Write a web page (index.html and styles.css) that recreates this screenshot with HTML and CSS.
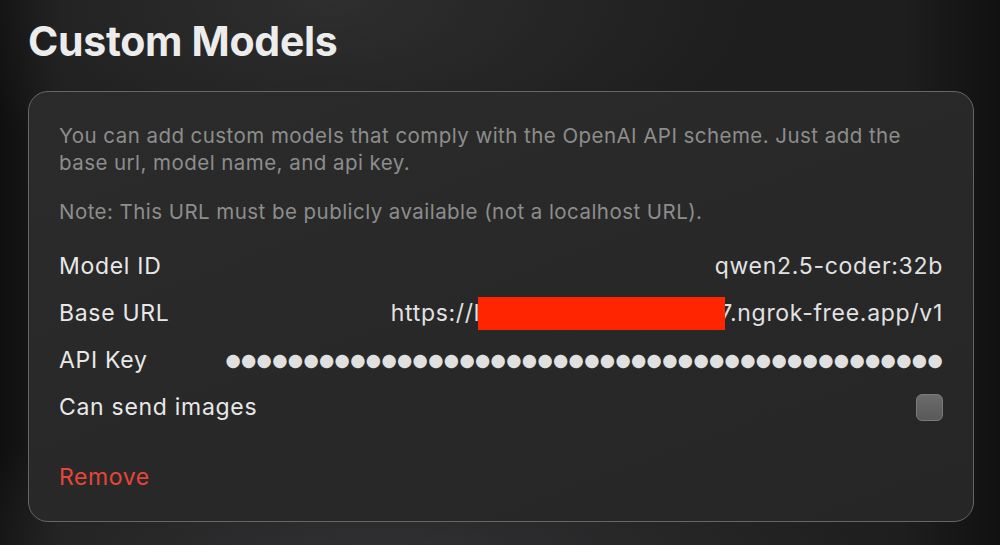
FILE: index.html
```html
<!DOCTYPE html>
<html lang="en">
<head>
<meta charset="utf-8">
<title>Custom Models</title>
<link rel="stylesheet" href="styles.css">
</head>
<body>
<main class="page">
  <h1 class="title">Custom Models</h1>
  <section class="card">
    <p class="desc">You can add custom models that comply with the OpenAI API scheme. Just add the base url, model name, and api key.</p>
    <p class="desc note">Note: This URL must be publicly available (not a localhost URL).</p>
    <div class="rows">
      <div class="row">
        <span class="label">Model ID</span>
        <span class="value">qwen2.5-coder:32b</span>
      </div>
      <div class="row">
        <span class="label">Base URL</span>
        <span class="value url"><span>https://l</span><span class="redact"></span><span>7.ngrok-free.app/v1</span></span>
      </div>
      <div class="row">
        <span class="label">API Key</span>
        <span class="value dots">●●●●●●●●●●●●●●●●●●●●●●●●●●●●●●●●●●●●●●●●●●●●●●</span>
      </div>
      <div class="row">
        <span class="label">Can send images</span>
        <span class="checkbox"></span>
      </div>
    </div>
    <div class="remove">Remove</div>
  </section>
</main>
</body>
</html>
```

FILE: styles.css
```css
html, body {
  margin: 0;
  padding: 0;
  height: 100%;
}
body {
  background:
    radial-gradient(ellipse 420px 200px at 330px 0px, rgba(60,60,60,0.55), rgba(60,60,60,0) 100%),
    radial-gradient(ellipse 520px 160px at 380px 560px, rgba(62,62,66,0.6), rgba(62,62,66,0) 100%),
    linear-gradient(90deg, #0f0f0f 0px, #1d1d1d 60px, #1e1e1e 900px, #111111 1000px);
  font-family: Inter, "Liberation Sans", sans-serif;
  overflow: hidden;
}
.page {
  padding: 16px 0 0 28px;
  width: 946px;
}
.title {
  margin: 0;
  font-size: 41px;
  line-height: 50px;
  font-weight: 700;
  letter-spacing: -0.3px;
  color: #ececec;
}
.card {
  margin-top: 25px;
  box-sizing: border-box;
  width: 946px;
  height: 431px;
  border: 1px solid #666666;
  border-radius: 20px;
  background: linear-gradient(160deg, #2b2b2b 0%, #282828 60%, #262626 100%);
  padding: 30px 30px 0 30px;
}
.desc {
  margin: 0;
  font-size: 20.5px;
  letter-spacing: 0.45px;
  line-height: 27px;
  color: #8d8d8d;
}
.note {
  margin-top: 22px;
}
.rows {
  margin-top: 18px;
  display: flex;
  flex-direction: column;
}
.row {
  display: flex;
  align-items: center;
  justify-content: space-between;
  height: 47px;
}
.label {
  font-size: 23px;
  letter-spacing: 0.7px;
  line-height: 47px;
  color: #e8e8e8;
}
.value {
  font-size: 23px;
  letter-spacing: 0.7px;
  line-height: 47px;
  color: #e2e2e2;
}
.url {
  display: flex;
  align-items: center;
}
.redact {
  display: inline-block;
  position: relative;
  z-index: 1;
  width: 247px;
  height: 33px;
  margin: 0 -6px 0 -2px;
  background: #ff2500;
}
.dots {
  font-family: "DejaVu Sans", sans-serif;
  font-size: 17.5px;
  letter-spacing: 0.33px;
  color: #e0e0e0;
}
.checkbox {
  box-sizing: border-box;
  width: 27px;
  height: 27px;
  border-radius: 6px;
  border: 1px solid #7a7a7a;
  background: linear-gradient(180deg, #6b6b6b 0%, #595959 100%);
}
.remove {
  margin-top: 23px;
  font-size: 23px;
  letter-spacing: 0.6px;
  line-height: 47px;
  color: #e5453b;
}
```
